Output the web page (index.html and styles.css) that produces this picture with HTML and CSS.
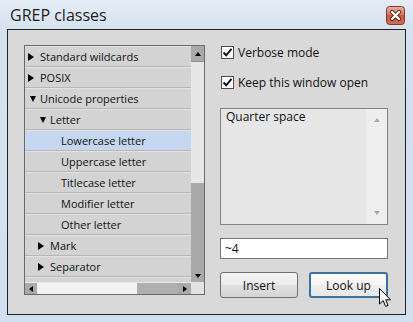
FILE: index.html
```html
<!DOCTYPE html>
<html lang="en">
    <head>
        <title>GREP classes</title>
        <meta charset="utf-8" />
        <link rel="stylesheet" href="styles.css">
    </head>
    <body>
        <div class="window">
            <div class="titlebar">
                <span class="title">GREP classes</span>
                <div class="close">
                    <svg width="19" height="19" viewBox="0 0 19 19">
                        <defs>
                            <linearGradient id="red" x1="0" y1="0" x2="0" y2="1">
                                <stop offset="0" stop-color="#eab0a0" />
                                <stop offset="0.45" stop-color="#d77a63" />
                                <stop offset="0.5" stop-color="#c85a40" />
                                <stop offset="1" stop-color="#d46c4c" />
                            </linearGradient>
                        </defs>
                        <rect x="0.5" y="0.5" width="18" height="18" rx="3" fill="url(#red)" stroke="#7d3b2e" />
                        <path d="M6 6 L13 13 M13 6 L6 13" stroke="#5a2418" stroke-width="4.2" stroke-linecap="round" />
                        <path d="M6 6 L13 13 M13 6 L6 13" stroke="#ffffff" stroke-width="2.4" stroke-linecap="round" />
                    </svg>
                </div>
            </div>
            <div class="client">
                <div class="tree">
                    <div class="rows">
                        <div class="row lv0"><span class="slot"><span class="tri closed"></span></span>Standard wildcards</div>
                        <div class="row lv0"><span class="slot"><span class="tri closed"></span></span>POSIX</div>
                        <div class="row lv0"><span class="slot"><span class="tri open"></span></span>Unicode properties</div>
                        <div class="row lv1"><span class="slot"><span class="tri open"></span></span>Letter</div>
                        <div class="row lv2 selected">Lowercase letter</div>
                        <div class="row lv2">Uppercase letter</div>
                        <div class="row lv2">Titlecase letter</div>
                        <div class="row lv2">Modifier letter</div>
                        <div class="row lv2">Other letter</div>
                        <div class="row lv1"><span class="slot"><span class="tri closed"></span></span>Mark</div>
                        <div class="row lv1"><span class="slot"><span class="tri closed"></span></span>Separator</div>
                        <div class="row lv1"></div>
                    </div>
                    <div class="vscroll">
                        <div class="sb-btn up"><span class="arr-up"></span></div>
                        <div class="sb-track"></div>
                        <div class="sb-thumb"></div>
                        <div class="sb-btn down"><span class="arr-down"></span></div>
                    </div>
                    <div class="hscroll">
                        <div class="sb-btn left"><span class="arr-left"></span></div>
                        <div class="sb-hthumb"></div>
                        <div class="sb-htrack"></div>
                        <div class="sb-btn right"><span class="arr-right"></span></div>
                    </div>
                    <div class="corner"></div>
                </div>
                <div class="side">
                    <label class="check">
                        <span class="box">
                            <svg width="11" height="11" viewBox="0 0 11 11">
                                <path d="M1.5 5.5 L4.2 8.3 L9.5 1.8" fill="none" stroke="#111" stroke-width="2" />
                            </svg>
                        </span>
                        Verbose mode
                    </label>
                    <label class="check second">
                        <span class="box">
                            <svg width="11" height="11" viewBox="0 0 11 11">
                                <path d="M1.5 5.5 L4.2 8.3 L9.5 1.8" fill="none" stroke="#111" stroke-width="2" />
                            </svg>
                        </span>
                        Keep this window open
                    </label>
                    <div class="listbox">
                        <div class="list-text">Quarter space</div>
                        <div class="list-scroll">
                            <span class="arr-up light"></span>
                            <span class="arr-down light"></span>
                        </div>
                    </div>
                    <div class="edit">~4</div>
                    <div class="buttons">
                        <button class="btn" type="button">Insert</button>
                        <button class="btn focus" type="button">Look up</button>
                    </div>
                </div>
            </div>
            <svg class="cursor" width="13" height="20" viewBox="0 0 13 20">
                <path d="M0.5 0.5 L0.5 16 L4.2 12.6 L6.6 18.4 L9 17.4 L6.7 11.8 L11.5 11.8 Z" fill="#fff" stroke="#000" stroke-width="1" stroke-linejoin="miter" />
            </svg>
        </div>
    </body>
</html>
```

FILE: styles.css
```css
html, body {
    margin: 0px;
    padding: 0px;
    background: #d6e2f0;
}
.window {
    position: relative;
    display: flex;
    flex-direction: column;
    width: 413px;
    height: 322px;
    background: linear-gradient(to bottom, #e4ecf6 0px, #d6e2f0 30px, #d2dfee 100%);
    font-family: "Open Sans", sans-serif;
    color: #111;
}
.titlebar {
    display: flex;
    justify-content: space-between;
    align-items: flex-start;
    height: 29px;
    padding: 0px 8px 0px 10px;
}
.title {
    font-size: 16px;
    line-height: 30px;
    color: #1c1c1c;
}
.close {
    margin-top: 6px;
    width: 19px;
    height: 19px;
}
.close svg {
    display: block;
}
.client {
    display: flex;
    align-items: flex-start;
    gap: 15px;
    margin: 0px 7px 7px;
    border: 1px solid #222;
    padding: 15px 17px 0px 16px;
    box-sizing: border-box;
    height: 286px;
    background: #d9d9d9;
}
.tree {
    display: grid;
    grid-template-columns: 1fr 13px;
    grid-template-rows: 1fr 12px;
    width: 181px;
    height: 250px;
    box-sizing: border-box;
    border: 1px solid #6a6a6a;
    font-size: 11px;
}
.rows {
    overflow: hidden;
    background: #d3d3d3;
}
.row {
    display: flex;
    align-items: center;
    height: 21px;
    box-sizing: border-box;
    border-top: 1px solid #e2e2e2;
    border-bottom: 1px solid #b7b7b7;
    white-space: nowrap;
}
.lv0 {
    padding-left: 3px;
}
.lv1 {
    padding-left: 13px;
}
.lv2 {
    padding-left: 36px;
}
.selected {
    background: #c4d6f0;
}
.slot {
    display: flex;
    align-items: center;
    width: 12px;
    height: 100%;
}
.tri {
    display: block;
    width: 0px;
    height: 0px;
}
.tri.closed {
    border-left: 6px solid #000;
    border-top: 4px solid transparent;
    border-bottom: 4px solid transparent;
}
.tri.open {
    margin-left: 2px;
    border-top: 6px solid #000;
    border-left: 3.5px solid transparent;
    border-right: 3.5px solid transparent;
}
.vscroll {
    display: flex;
    flex-direction: column;
}
.sb-btn {
    display: flex;
    align-items: center;
    justify-content: center;
    background: #a9a9a9;
}
.sb-btn.up {
    height: 16px;
    box-sizing: border-box;
    border-bottom: 1px solid #8e8e8e;
}
.sb-btn.down {
    height: 12px;
}
.sb-track {
    height: 121px;
    background: #e7e7e7;
}
.sb-thumb {
    flex: 1;
    background: #a9a9a9;
}
.hscroll {
    display: flex;
    border-top: 1px solid #e8e8e8;
}
.sb-btn.left {
    width: 12px;
}
.sb-btn.right {
    width: 13px;
}
.sb-hthumb {
    width: 100px;
    background: #f3f3f3;
}
.sb-htrack {
    flex: 1;
    background: #afafaf;
}
.corner {
    background: #e2e2e2;
}
.arr-up, .arr-down, .arr-left, .arr-right {
    display: block;
    width: 0px;
    height: 0px;
}
.arr-up {
    border-bottom: 4px solid #000;
    border-left: 3.5px solid transparent;
    border-right: 3.5px solid transparent;
}
.arr-down {
    border-top: 4px solid #000;
    border-left: 3.5px solid transparent;
    border-right: 3.5px solid transparent;
}
.arr-left {
    border-right: 4px solid #000;
    border-top: 3.5px solid transparent;
    border-bottom: 3.5px solid transparent;
}
.arr-right {
    border-left: 4px solid #000;
    border-top: 3.5px solid transparent;
    border-bottom: 3.5px solid transparent;
}
.arr-up.light {
    border-bottom-color: #a8a8a8;
}
.arr-down.light {
    border-top-color: #a8a8a8;
}
.side {
    display: flex;
    flex-direction: column;
    width: 168px;
    font-size: 12px;
}
.check {
    display: flex;
    align-items: center;
    gap: 4px;
    height: 15px;
    padding-left: 1px;
}
.check.second {
    margin-top: 15px;
}
.box {
    display: flex;
    align-items: center;
    justify-content: center;
    width: 13px;
    height: 13px;
    box-sizing: border-box;
    border: 1px solid #4c4c4c;
    background: #fff;
}
.box svg {
    display: block;
}
.listbox {
    display: flex;
    margin-top: 18px;
    height: 117px;
    box-sizing: border-box;
    border: 1px solid #828282;
    background: #e6e6e6;
}
.list-text {
    flex: 1;
    padding-left: 5px;
    line-height: 15px;
}
.list-scroll {
    display: flex;
    flex-direction: column;
    justify-content: space-between;
    align-items: center;
    width: 21px;
    padding: 9px 0px 9px;
    box-sizing: border-box;
    background: #eeeeee;
}
.edit {
    margin-top: 13px;
    height: 21px;
    box-sizing: border-box;
    border: 1px solid #747474;
    padding-left: 4px;
    background: #fff;
    line-height: 19px;
}
.buttons {
    display: flex;
    justify-content: space-between;
    margin-top: 13px;
}
.btn {
    width: 78px;
    height: 26px;
    border: 1px solid #707070;
    border-radius: 3px;
    padding: 0px;
    background: linear-gradient(to bottom, #f4f4f4 0%, #ececec 50%, #e0e0e0 51%, #d4d4d4 100%);
    font-family: "Open Sans", sans-serif;
    font-size: 12px;
    color: #111;
}
.btn.focus {
    width: 79px;
    border: 2px solid #3a72a2;
    background: linear-gradient(to bottom, #fcfcfc 0%, #f4f4f4 50%, #eeeeee 51%, #e8e8e8 100%);
}
.cursor {
    position: absolute;
    left: 379px;
    top: 288px;
}
```
